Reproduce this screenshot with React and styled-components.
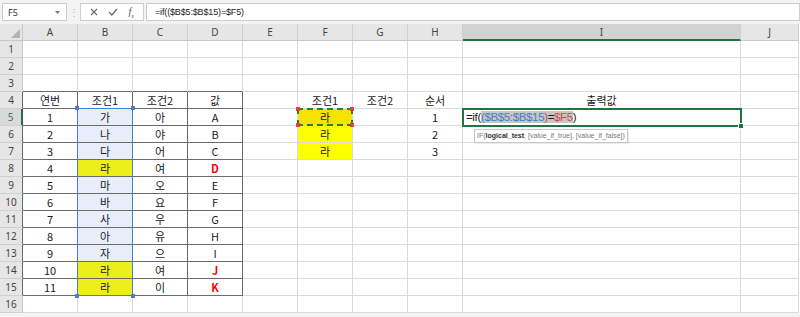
import React from 'react';
import styled, { createGlobalStyle } from 'styled-components';

const COLS = ['A', 'B', 'C', 'D', 'E', 'F', 'G', 'H', 'I', 'J'];
const ROW_COUNT = 16;
const GRID = '#dadada';
const EDGE = '#6a6a6a';
const GREEN = '#217346';
const BLUE = '#4a7ccf';
const RED = '#d9463f';

const bCol = ['가', '나', '다', '라', '마', '바', '사', '아', '자', '라', '라'];
const cCol = ['아', '야', '어', '여', '오', '요', '우', '유', '으', '여', '이'];
const dCol = ['A', 'B', 'C', 'D', 'E', 'F', 'G', 'H', 'I', 'J', 'K'];
const redD = ['D', 'J', 'K'];

// sheet contents keyed by address
const cells = {
  A4: { text: '연번' },
  B4: { text: '조건1' },
  C4: { text: '조건2' },
  D4: { text: '값' },
  F4: { text: '조건1' },
  G4: { text: '조건2' },
  H4: { text: '순서' },
  I4: { text: '출력값' },
  F5: { text: '라', bg: '#f6e400' },
  F6: { text: '라', bg: '#ffff00' },
  F7: { text: '라', bg: '#ffff00' },
  H5: { text: '1' },
  H6: { text: '2' },
  H7: { text: '3' },
};
bCol.forEach((v, i) => {
  const r = i + 5;
  cells['A' + r] = { text: String(i + 1) };
  cells['B' + r] = { text: v, bg: v === '라' ? '#ecef1c' : '#e8eef9' };
  cells['C' + r] = { text: cCol[i] };
  cells['D' + r] = { text: dCol[i], red: redD.includes(dCol[i]) };
});

const inTable = (c, r) => c <= 3 && r >= 4 && r <= 15;

const GlobalStyle = createGlobalStyle`
  html, body {
    margin: 0;
    padding: 0;
    background: #fff;
  }
  body {
    font-family: 'Noto Sans', 'Liberation Sans', sans-serif;
  }
`;

const Frame = styled.div`
  width: 800px;
  height: 317px;
  overflow: hidden;
  background: #f3f3f3;
`;

const FormulaBar = styled.div`
  height: 24px;
  box-sizing: border-box;
  padding: 3px 0 3px 2px;
  display: flex;
  align-items: stretch;
`;

const Box = styled.div`
  box-sizing: border-box;
  background: #fff;
  border: 1px solid #cdcdcd;
  display: flex;
  align-items: center;
`;

const NameBox = styled(Box)`
  width: 65px;
  padding: 0 6px 0 5px;
  justify-content: space-between;
  font-size: 9px;
  color: #333;
`;

const Grip = styled.div`
  width: 13px;
  display: flex;
  align-items: center;
  justify-content: center;
  color: #b0b0b0;
  font-size: 10px;
`;

const FnBox = styled(Box)`
  width: 64px;
  justify-content: space-around;
  padding: 0 4px;
  color: #666;
`;

const FxMark = styled.span`
  font-family: 'Liberation Serif', serif;
  font-style: italic;
  font-size: 10px;
  color: #555;
  sub {
    font-size: 6px;
  }
`;

const FormulaInput = styled(Box)`
  flex: 1;
  margin-left: 2px;
  padding-left: 8px;
  font-family: 'Liberation Sans', sans-serif;
  font-size: 9px;
  letter-spacing: -0.15px;
  color: #222;
`;

const Sheet = styled.div`
  display: grid;
  grid-template-columns: 23px repeat(8, 55px) 278px 58px;
  grid-template-rows: repeat(17, 17px);
  background: #fff;
`;

const Corner = styled.div`
  grid-column: 1;
  grid-row: 1;
  background: #e6e6e6;
  border-right: 1px solid #c8c8c8;
  border-bottom: 1px solid #c8c8c8;
  box-sizing: border-box;
  display: flex;
  align-items: flex-end;
  justify-content: flex-end;
  padding: 0 2px 2px 0;
`;

const ColHead = styled.div`
  grid-column: ${p => p.$c};
  grid-row: 1;
  box-sizing: border-box;
  background: ${p => (p.$active ? '#d2d2d2' : '#e6e6e6')};
  border-right: 1px solid #cfcfcf;
  border-bottom: ${p => (p.$active ? `2px solid ${GREEN}` : '1px solid #c8c8c8')};
  display: flex;
  align-items: center;
  justify-content: center;
  font-size: 10px;
  color: #444;
`;

const RowHead = styled.div`
  grid-column: 1;
  grid-row: ${p => p.$r};
  box-sizing: border-box;
  background: ${p => (p.$active ? '#d9d9d9' : '#e6e6e6')};
  border-bottom: 1px solid #d0d0d0;
  border-right: ${p => (p.$active ? `2px solid ${GREEN}` : `1px solid ${p.$edge}`)};
  display: flex;
  align-items: center;
  justify-content: center;
  font-size: 10px;
  color: ${p => (p.$active ? '#3d7a55' : '#444')};
`;

const Cell = styled.div`
  grid-column: ${p => p.$c};
  grid-row: ${p => p.$r};
  box-sizing: border-box;
  border-right: 1px solid ${p => p.$rb};
  border-bottom: 1px solid ${p => p.$bb};
  background: ${p => p.$bg || '#fff'};
  color: ${p => (p.$red ? '#ff0000' : '#1a1a1a')};
  font-family: 'Noto Sans CJK KR', 'Liberation Sans', sans-serif;
  font-size: 11px;
  font-weight: ${p => (p.$red ? 700 : 400)};
  line-height: 16px;
  text-align: center;
  white-space: nowrap;
  overflow: hidden;
`;

const RangeBox = styled.div`
  grid-column: 3;
  grid-row: 6 / 17;
  margin: -1px 0 0 -1px;
  position: relative;
  border: 1px solid ${BLUE};
  pointer-events: none;
`;

const Marquee = styled.div`
  grid-column: 7;
  grid-row: 6;
  margin: -1px 0 0 -1px;
  position: relative;
  border: 2px dashed #2b7c3f;
  pointer-events: none;
`;

const Knob = styled.span`
  position: absolute;
  width: 4px;
  height: 4px;
  background: ${p => p.$color};
  ${p => (p.$v === 't' ? 'top' : 'bottom')}: ${p => p.$off};
  ${p => (p.$h === 'l' ? 'left' : 'right')}: ${p => p.$off};
`;

const ActiveCell = styled.div`
  grid-column: 10;
  grid-row: 6;
  margin: -1px -1px -1px -1px;
  position: relative;
  border: 2px solid ${GREEN};
  background: #fff;
  padding-left: 2px;
  font-family: 'Liberation Sans', sans-serif;
  font-size: 11.5px;
  letter-spacing: -0.35px;
  line-height: 15px;
  color: #1a1a1a;
  white-space: nowrap;
`;

const FillHandle = styled.span`
  position: absolute;
  right: -4px;
  bottom: -4px;
  width: 4px;
  height: 4px;
  background: ${GREEN};
  border: 1px solid #fff;
`;

const Mark = styled.span`
  background: #c6c6c6;
`;

const Ref = styled.span`
  color: ${p => p.$color};
`;

const Tip = styled.div`
  position: absolute;
  top: 19px;
  left: 10px;
  padding: 0 2px;
  height: 12px;
  line-height: 12px;
  background: #fff;
  border: 1px solid #c8c8c8;
  box-shadow: 1px 1px 1px rgba(0, 0, 0, 0.08);
  font-family: 'Liberation Sans', sans-serif;
  font-size: 7px;
  letter-spacing: 0;
  color: #777;
  b {
    color: #333;
  }
`;

const SelectAll = () => (
  <svg width="9" height="9" viewBox="0 0 9 9">
    <polygon points="9,0 9,9 0,9" fill="#b4b4b4" />
  </svg>
);

const Caret = () => (
  <svg width="5" height="3" viewBox="0 0 5 3">
    <polygon points="0,0 5,0 2.5,3" fill="#777" />
  </svg>
);

const Cross = () => (
  <svg width="8" height="8" viewBox="0 0 8 8">
    <path d="M1 1 L7 7 M7 1 L1 7" stroke="#666" strokeWidth="1.1" />
  </svg>
);

const Check = () => (
  <svg width="10" height="8" viewBox="0 0 10 8">
    <path d="M1 4.2 L3.8 7 L9 1" stroke="#666" strokeWidth="1.2" fill="none" />
  </svg>
);

const corners = [['t', 'l'], ['t', 'r'], ['b', 'l'], ['b', 'r']];

const App = () => {
  const rows = [];
  for (let r = 1; r <= ROW_COUNT; r++) {
    rows.push(
      <RowHead key={'h' + r} $r={r + 1} $active={r === 5} $edge={r >= 4 && r <= 15 ? EDGE : '#c8c8c8'}>
        {r}
      </RowHead>
    );
    COLS.forEach((col, i) => {
      const data = cells[col + r] || {};
      const rb = inTable(i, r) ? EDGE : GRID;
      const bb = inTable(i, r) || (i <= 3 && r === 3) ? EDGE : GRID;
      rows.push(
        <Cell key={col + r} $c={i + 2} $r={r + 1} $rb={rb} $bb={bb} $bg={data.bg} $red={data.red}>
          {data.text}
        </Cell>
      );
    });
  }

  return (
    <Frame>
      <GlobalStyle />
      <FormulaBar>
        <NameBox>
          F5
          <Caret />
        </NameBox>
        <Grip>⋮</Grip>
        <FnBox>
          <Cross />
          <Check />
          <FxMark>
            f<sub>x</sub>
          </FxMark>
        </FnBox>
        <FormulaInput>=if(($B$5:$B$15)=$F5)</FormulaInput>
      </FormulaBar>

      <Sheet>
        <Corner>
          <SelectAll />
        </Corner>
        {COLS.map((col, i) => (
          <ColHead key={col} $c={i + 2} $active={col === 'I'}>
            {col}
          </ColHead>
        ))}
        {rows}

        <RangeBox>
          {corners.map(([v, h]) => (
            <Knob key={v + h} $v={v} $h={h} $off="-3px" $color={BLUE} />
          ))}
        </RangeBox>

        <Marquee>
          {corners.map(([v, h]) => (
            <Knob key={v + h} $v={v} $h={h} $off="-3px" $color={RED} />
          ))}
        </Marquee>

        <ActiveCell>
          =if(
          <Mark>
            <Ref $color={BLUE}>($B$5:$B$15</Ref>
            <Ref $color="#c8505a">)</Ref>=<Ref $color={RED}>$F5</Ref>
          </Mark>
          )
          <FillHandle />
          <Tip>
            IF(<b>logical_test</b>, [value_if_true], [value_if_false])
          </Tip>
        </ActiveCell>
      </Sheet>
    </Frame>
  );
};

export default App;
